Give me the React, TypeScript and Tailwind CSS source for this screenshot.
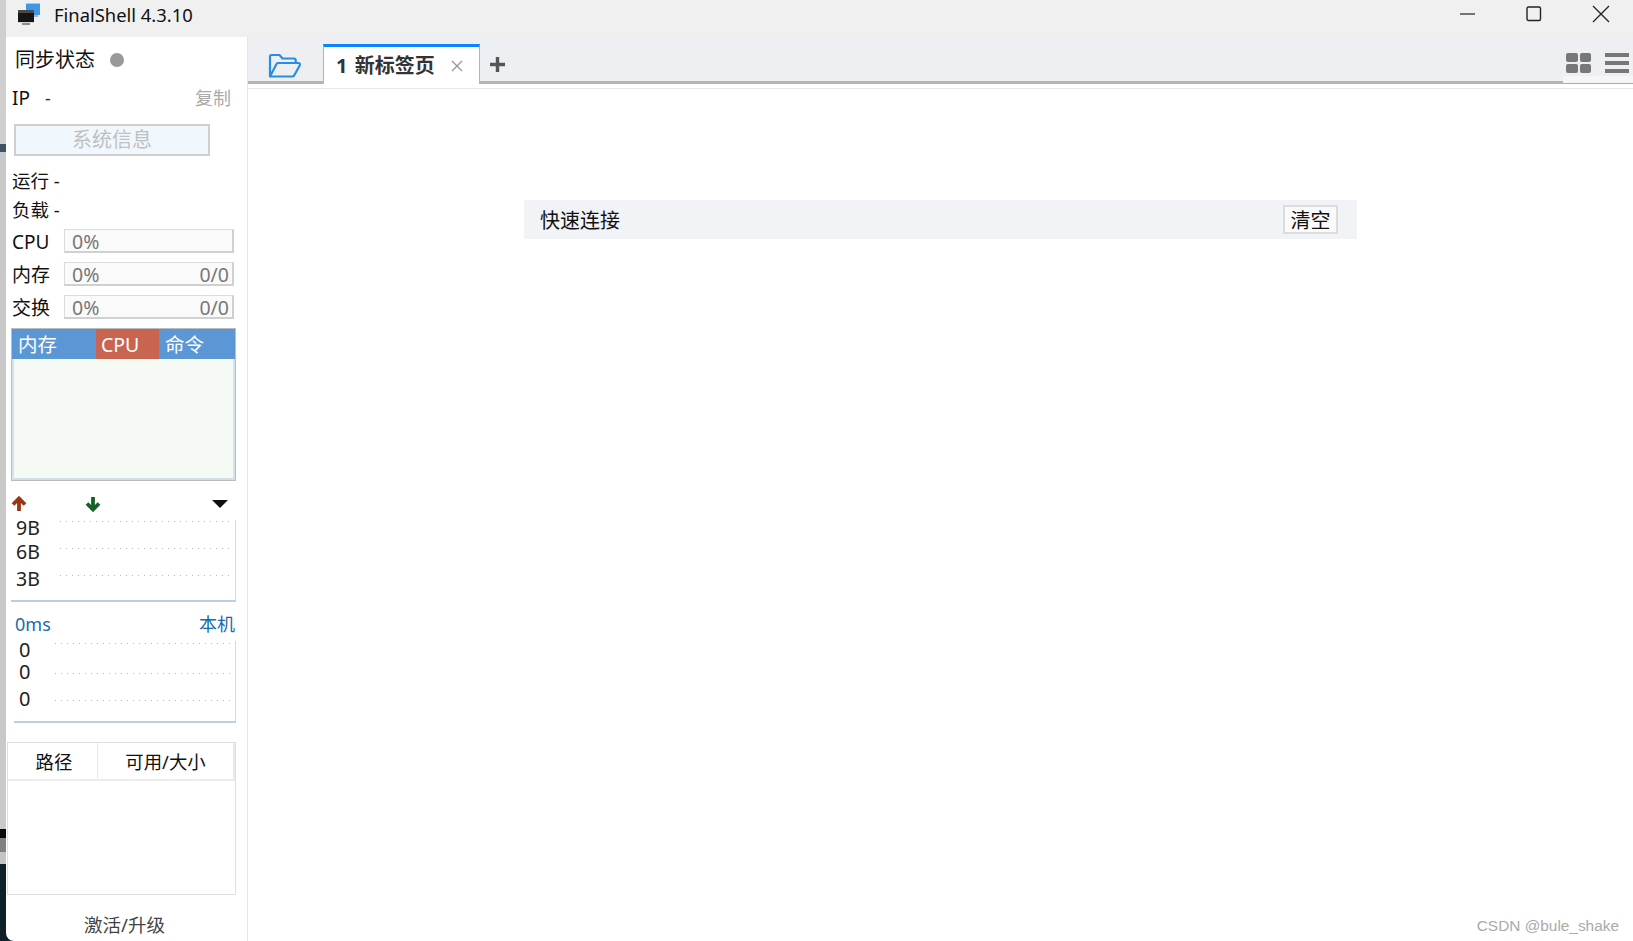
import React from 'react'

const FONT = "font-['Noto_Sans','Noto_Sans_CJK_SC',sans-serif]"

const StatBar = ({ label, value, extra }: { label: string; value: string; extra?: string }) => (
  <div className="flex items-center h-[24px] pl-[6px]">
    <span className="w-[52px] pt-[2px] text-[19px] leading-[24px] text-[#111]">{label}</span>
    <div className="w-[170px] h-[24px] flex items-center justify-between pt-[2px] pl-[7px] pr-[3px] bg-[#fafafa] border border-[#dcdcdc] border-b-2 border-r-2 border-b-[#d0d0d0] border-r-[#d0d0d0]">
      <span className="text-[19.5px] leading-[22px] text-[#777]">{value}</span>
      {extra && <span className="text-[19.5px] leading-[22px] text-[#777]">{extra}</span>}
    </div>
  </div>
)

const DotLine = () => (
  <div className="h-[1px] bg-[repeating-linear-gradient(90deg,#b4b4b4_0,#b4b4b4_1px,transparent_1px,transparent_6px)]" />
)

const LogoIcon = () => (
  <svg width="24" height="25" viewBox="0 0 24 25">
    <rect x="9" y="2" width="14" height="12" fill="#3f96ea" />
    <rect x="9" y="2" width="14" height="1" fill="#9cc9f2" />
    <rect x="15" y="14" width="6" height="2" fill="#a8b8c8" />
    <rect x="1" y="9" width="16" height="12" fill="#161616" />
    <rect x="1" y="9" width="16" height="3" fill="#4a4a4a" />
    <rect x="1" y="21" width="16" height="1" fill="#d4d4d4" />
    <rect x="5" y="22" width="8" height="2" fill="#8c8c8c" />
  </svg>
)

const FolderIcon = () => (
  <svg width="34" height="26" viewBox="0 0 34 26" fill="none" stroke="#2a8de4" strokeWidth="2.2" strokeLinejoin="round">
    <path d="M2 23V3.5C2 2.5 2.7 2 3.5 2h8l3 3.5h11.5c1 0 1.7.7 1.7 1.7V10" />
    <path d="M2 23.5 8.5 11c.3-.6.8-1 1.5-1h20.5c1.2 0 1.9 1.2 1.3 2.2L26 22.7c-.4.6-.9.8-1.5.8H2Z" />
  </svg>
)

const App = () => {
  return (
    <div className={`flex w-[1633px] h-[941px] overflow-hidden bg-white ${FONT}`}>
      {/* desktop showing behind the window */}
      <div className="w-[6px] flex flex-col bg-[#cfcfcf]">
        <div className="h-[144px]" />
        <div className="h-[8px] bg-[#3b5566]" />
        <div className="h-[677px] bg-[#c9c9c9]" />
        <div className="h-[9px] bg-[#0a0a0a]" />
        <div className="h-[14px] bg-[#808080]" />
        <div className="h-[12px] bg-[#c4c4c4]" />
        <div className="flex-1 bg-[#10202a]" />
      </div>

      <div className="flex-1 flex flex-col min-w-0 bg-[#10202a]">
        {/* Title bar */}
        <div className="h-[37px] shrink-0 flex items-center bg-[#f0f0f0]">
          <div className="ml-[11px] mb-[11px]">
            <LogoIcon />
          </div>
          <span className="ml-[13px] mb-[7px] text-[18.4px] leading-[24px] text-[#111]">FinalShell 4.3.10</span>
          <div className="ml-auto flex items-center mb-[9px]">
            <svg width="16" height="16" viewBox="0 0 16 16" className="mr-[50px]"><path d="M0 8h15" stroke="#222" strokeWidth="1.2" /></svg>
            <svg width="16" height="16" viewBox="0 0 16 16" className="mr-[50px]"><rect x="1" y="1" width="13.5" height="13.5" rx="1.5" fill="none" stroke="#222" strokeWidth="1.4" /></svg>
            <svg width="18" height="18" viewBox="0 0 18 18" className="mr-[23px]"><path d="M1 1l16 16M17 1 1 17" stroke="#222" strokeWidth="1.3" /></svg>
          </div>
        </div>

        <div className="flex-1 flex min-h-0">
          {/* Sidebar */}
          <aside className="w-[242px] shrink-0 flex flex-col bg-white border-r border-[#e6e6e6] rounded-bl-[8px]">
            <div className="h-[46px] shrink-0 flex items-center pl-[9px]">
              <span className="text-[20px] text-[#111]">同步状态</span>
              <span className="ml-[15px] w-[14px] h-[14px] rounded-full bg-[#999]" />
            </div>

            <div className="h-[30px] shrink-0 flex items-center pl-[6px] pr-[16px] text-[18px]">
              <span className="w-[33px] text-[19px] text-[#111]">IP</span>
              <span className="text-[#333]">-</span>
              <span className="ml-auto text-[18px] text-[#aaa]">复制</span>
            </div>

            <div className="mt-[11px] ml-[8px] w-[196px] h-[32px] shrink-0 flex items-center justify-center bg-[#f0f8fe] border-2 border-[#cfcfcf] text-[20px] text-[#c0c0c0]">
              系统信息
            </div>

            <div className="mt-[10px] h-[29px] shrink-0 flex items-center pl-[6px] text-[18.5px] text-[#111]">运行 -</div>
            <div className="h-[29px] shrink-0 flex items-center pl-[6px] text-[18.5px] text-[#111]">负载 -</div>

            <div className="mt-[5px] flex flex-col gap-y-[9px] shrink-0">
              <StatBar label="CPU" value="0%" />
              <StatBar label="内存" value="0%" extra="0/0" />
              <StatBar label="交换" value="0%" extra="0/0" />
            </div>

            {/* Process table */}
            <div className="mt-[9px] ml-[5px] w-[225px] h-[153px] shrink-0 flex flex-col border border-[#bcbcbc] bg-[#f5faf4]">
              <div className="h-[30px] shrink-0 flex text-[19.5px] leading-[31px] text-white">
                <div className="w-[84px] pl-[6px] bg-[#5b96d5]">内存</div>
                <div className="w-[63px] pl-[5px] bg-[#c96450]">CPU</div>
                <div className="flex-1 pl-[6px] bg-[#5b96d5]">命令</div>
              </div>
              <div className="flex-1 border-x-2 border-b-2 border-x-[#d4e3ea] border-b-[#d0e0e8]" />
            </div>

            {/* Network */}
            <div className="mt-[11px] h-[24px] shrink-0 flex items-center text-[#111]">
              <svg width="16" height="16" viewBox="0 0 16 16" className="ml-[5px]">
                <path d="M8 15V3M2 8.5 8 2.5 14 8.5" fill="none" stroke="#9a3412" strokeWidth="3.8" />
              </svg>
              <svg width="16" height="16" viewBox="0 0 16 16" className="ml-[58px]">
                <path d="M8 1v12M2 7.5 8 13.5 14 7.5" fill="none" stroke="#14602a" strokeWidth="3.8" />
              </svg>
              <svg width="16" height="10" viewBox="0 0 16 10" className="ml-[111px]">
                <path d="M0 1h16L8 9Z" fill="#111" />
              </svg>
            </div>

            <div className="mt-[4px] ml-[5px] w-[225px] h-[82px] shrink-0 flex border-b-2 border-[#bccfdb] text-[19.5px] text-[#222]">
              <div className="w-[49px] pl-[5px]">
                <div className="h-[16px] leading-[16px]">9B</div>
                <div className="h-[32px] leading-[32px]">6B</div>
                <div className="h-[22px] leading-[22px]">3B</div>
              </div>
              <div className="flex-1 flex flex-col border-r border-[#d0dce4] pt-[1px] pr-[4px]">
                <DotLine />
                <div className="h-[26px]" />
                <DotLine />
                <div className="h-[26px]" />
                <DotLine />
              </div>
            </div>

            <div className="mt-[9px] h-[26px] shrink-0 flex items-center justify-between pl-[9px] pr-[12px] text-[18px] text-[#1a6aaa]">
              <span>0ms</span>
              <span>本机</span>
            </div>

            <div className="mt-[4px] ml-[8px] w-[222px] h-[82px] shrink-0 flex border-b-2 border-[#bccfdb] text-[20px] text-[#222]">
              <div className="w-[41px] pl-[5px]">
                <div className="h-[18px] leading-[18px]">0</div>
                <div className="h-[26px] leading-[26px]">0</div>
                <div className="h-[28px] leading-[28px]">0</div>
              </div>
              <div className="flex-1 flex flex-col border-r border-[#d0dce4] pt-[2px] pr-[4px]">
                <DotLine />
                <div className="h-[29px]" />
                <DotLine />
                <div className="h-[26px]" />
                <DotLine />
              </div>
            </div>

            {/* Disks */}
            <div className="mt-[19px] ml-[1px] w-[229px] h-[153px] shrink-0 flex flex-col border border-[#dedede]">
              <div className="h-[38px] shrink-0 flex border-b-2 border-[#ececec] text-[18.4px] leading-[38px] text-[#111]">
                <div className="w-[90px] pl-[3px] text-center border-r border-[#e8e8e8]">路径</div>
                <div className="flex-1 text-center border-r-2 border-[#e8e8e8]">可用/大小</div>
              </div>
            </div>

            <div className="flex-1 flex items-center justify-center pt-[13px] pr-[4px] text-[18.5px] text-[#444]">激活/升级</div>
          </aside>

          {/* Main area */}
          <main className="flex-1 min-w-0 flex flex-col bg-white">
            <div className="h-[47px] shrink-0 flex bg-[#eeeff3]">
              <div className="flex-1 flex items-end border-b-[3px] border-[#b4b4b4]">
                <div className="w-[75px] h-[28px] flex items-start pl-[20px]">
                  <FolderIcon />
                </div>
                <div className="-mb-[3px] w-[157px] h-[40px] shrink-0 flex items-center bg-white border-t-[3px] border-t-[#0a84ff] border-x border-x-[#b4b4b4] pl-[12px]">
                  <span className="text-[20px] font-bold text-[#333] [word-spacing:2px]">1 新标签页</span>
                  <svg width="12" height="12" viewBox="0 0 12 12" className="ml-[16px]">
                    <path d="M1 1l10 10M11 1 1 11" stroke="#999" strokeWidth="1.4" />
                  </svg>
                </div>
                <svg width="17" height="17" viewBox="0 0 17 17" className="ml-[9px] mb-[8px]">
                  <path d="M8.5 1v15M1 8.5h15" stroke="#555" strokeWidth="3.4" />
                </svg>
              </div>
              <div className="w-[70px] self-end h-[8px] bg-[#f6f6f6] border-b border-[#aaaaaa]" />
            </div>
            <div className="relative flex-1 mt-[4px] border-t border-[#e8e8e8] bg-white">
              <div className="absolute right-[42px] top-[-36px] grid grid-cols-2 gap-[2px] w-[25px] h-[20px]">
                <div className="bg-[#777] rounded-[2px]" />
                <div className="bg-[#777] rounded-[2px]" />
                <div className="bg-[#777] rounded-[2px]" />
                <div className="bg-[#777] rounded-[2px]" />
              </div>
              <div className="absolute right-[4px] top-[-36px] w-[24px] h-[20px] flex flex-col justify-between">
                <div className="h-[4px] bg-[#777]" />
                <div className="h-[4px] bg-[#777]" />
                <div className="h-[4px] bg-[#777]" />
              </div>

              <div className="mt-[111px] ml-[276px] w-[833px] h-[39px] flex items-center bg-[#f2f3f7] pl-[16px] pr-[19px] text-[20px] text-[#111]">
                <span className="mt-[3px]">快速连接</span>
                <button className="ml-auto w-[55px] h-[29px] flex items-center justify-center pt-[3px] bg-[#fafafa] border-2 border-[#dcdcdc] text-[20px] text-[#111]">
                  清空
                </button>
              </div>

              <span className="absolute right-[14px] bottom-[4px] font-['Liberation_Sans',sans-serif] text-[15.4px] text-[#aaa]">
                CSDN @bule_shake
              </span>
            </div>
          </main>
        </div>
      </div>
    </div>
  )
}

export default App
